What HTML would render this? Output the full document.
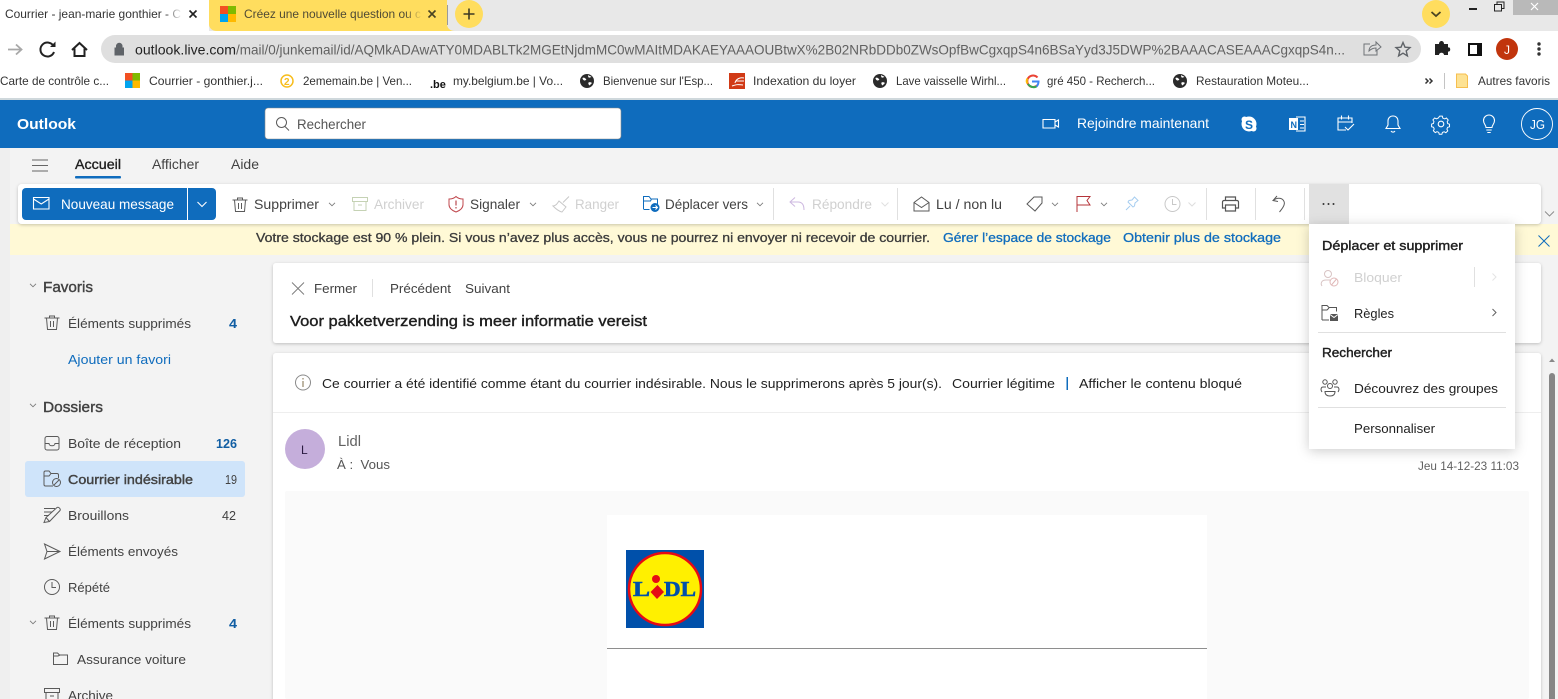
<!DOCTYPE html>
<html lang="fr"><head><meta charset="utf-8"><title>Outlook</title>
<style>
html,body{margin:0;padding:0;width:1558px;height:699px;overflow:hidden;background:#f3f3f3}
svg{display:block}
text{font-family:"Liberation Sans",sans-serif;font-size:13px;fill:#424242;white-space:pre}
.s{stroke:#5a5a5a;stroke-width:1;fill:none}
.w{stroke:#fff;stroke-width:1.1;fill:none}
.k{stroke:#222;stroke-width:2;fill:none}
.g{stroke:#c8c8c8;stroke-width:1;fill:none}
.c{stroke:#7a7a7a;stroke-width:.9;fill:none}
.bm{font-size:12px;fill:#333}
.d{fill:#1f1f1f}
.l{fill:#0f6cbd}
.dis{fill:#d0d0d0}
.b{font-weight:bold}
</style></head><body>
<svg width="1558" height="699" viewBox="0 0 1558 699" xmlns="http://www.w3.org/2000/svg">
<defs>
<linearGradient id="f1"><stop offset="0" stop-color="#fff" stop-opacity="0"/><stop offset="1" stop-color="#fff"/></linearGradient>
<linearGradient id="f2"><stop offset="0" stop-color="#ffdd5e" stop-opacity="0"/><stop offset="1" stop-color="#ffdd5e"/></linearGradient>
<filter id="sh" x="-5%" y="-20%" width="110%" height="140%"><feDropShadow dx="0" dy="1" stdDeviation="1.5" flood-color="#000" flood-opacity=".22"/></filter>
<filter id="sh2" x="-15%" y="-10%" width="130%" height="125%"><feDropShadow dx="0" dy="2" stdDeviation="6" flood-color="#000" flood-opacity=".2"/></filter>
<g id="ch"><path d="M-3-1.200 0 1.800 3-1.200" class="c"/></g>
<g id="gl"><circle r="7" fill="#2b2b2b"/><path d="M-4.500-3c1.500-1 2.500 0 3.500 1s-1 1.500-1.500 1.500-2-1-2-2.500zM1.500 1.500c1.500-1 3 0 3.500.5l-2.500 2.500c-1-1-1.500-2-1-3zM1-6c1 1 2.500 1 3.500 2l-2.500.8c-1-1-1-1.800-1-2.800z" fill="#fff"/></g>
<g id="tr"><path d="M-7.500-5h15M-5.500-5l1 11.500h9l1-11.500M-2.500-5v-2h5v2M-1.500-2v6M1.500-2v6" class="s"/></g>
</defs>

<!-- Chrome tab strip -->
<rect width="1558" height="31" fill="#e8e8e8"/>
<path d="M0 0H209V31H0Z" fill="#fff"/>
<path d="M209 0H447V24C447 28 450 31 455 31H217C212 31 209 28 209 24Z" fill="#ffdd5e"/>
<text x="5" y="18" style="font-size:12px;fill:#333" textLength="176" lengthAdjust="spacingAndGlyphs">Courrier - jean-marie gonthier - C</text>
<rect x="165" y="4" width="17" height="22" fill="url(#f1)"/>
<path d="M189.500 10.500l7 7M196.500 10.500l-7 7" stroke="#222" stroke-width="1.600" fill="none"/>
<rect x="220" y="6" width="8" height="8" fill="#f25022"/><rect x="228" y="6" width="8" height="8" fill="#7fba00"/><rect x="220" y="14" width="8" height="8" fill="#00a4ef"/><rect x="228" y="14" width="8" height="8" fill="#ffb900"/>
<text x="244" y="18" style="font-size:12px;fill:#4f4a35" textLength="177" lengthAdjust="spacingAndGlyphs">Créez une nouvelle question ou c</text>
<rect x="405" y="4" width="17" height="22" fill="url(#f2)"/>
<path d="M428.500 10.500l7 7M435.500 10.500l-7 7" stroke="#4a4422" stroke-width="1.600" fill="none"/>
<rect x="447" y="5" width="1" height="20" fill="#9a9a9a"/>
<circle cx="469" cy="14" r="14" fill="#ffdd5e"/>
<path d="M463.500 14h11M469 8.500v11" stroke="#3d3a24" stroke-width="1.600" fill="none"/>
<circle cx="1436" cy="14" r="14" fill="#ffdd5e"/>
<path d="M1431.500 12l4.500 4 4.500-4" stroke="#4a4422" stroke-width="1.800" fill="none"/>
<rect x="1469" y="8" width="8" height="2" fill="#222"/>
<path d="M1494.500 4.500h7v6.500h-7zM1497 4.500v-2.500h7v6.500h-2.500" stroke="#222" stroke-width="1" fill="none"/>
<rect x="1513" y="0" width="45" height="15" fill="#b9b9b9"/>
<path d="M1531 3l7 7M1538 3l-7 7" stroke="#fff" stroke-width="1.200" fill="none"/>

<!-- Chrome toolbar -->
<rect y="31" width="1558" height="68" fill="#fff"/>
<path d="M8 49.500h13M16 44.500l5.500 5-5.500 5" stroke="#a8a8a8" stroke-width="1.800" fill="none"/>
<path d="M53.500 46A7 7 0 1 0 54 52" class="k"/><path d="M50 47h5.500v-5.500z" fill="#222"/>
<path d="M72 50l7.500-7 7.500 7M74.500 48.500V56h10V48.500" class="k"/>
<rect x="101" y="35" width="1320" height="28" rx="14" fill="#dfdfdf"/>
<path d="M115 48h8.500v7H115zM116.500 48v-2a2.700 2.700 0 0 1 5.500 0v2" fill="#5f6368" stroke="#5f6368"/>
<text x="135" y="54.500" style="font-size:14px;fill:#222" textLength="101" lengthAdjust="spacingAndGlyphs">outlook.live.com</text>
<text x="236" y="54.500" style="font-size:14px;fill:#616161" textLength="1109" lengthAdjust="spacingAndGlyphs">/mail/0/junkemail/id/AQMkADAwATY0MDABLTk2MGEtNjdmMC0wMAItMDAKAEYAAAOUBtwX%2B02NRbDDb0ZWsOpfBwCgxqpS4n6BSaYyd3J5DWP%2BAAACASEAAACgxqpS4n...</text>
<path d="M1370 44h-6v11h13v-5M1369 51c0-4 3-6 7-6v-3l5 5-5 4v-3c-3 0-5 1-7 3z" stroke="#6f7377" stroke-width="1" fill="none"/>
<path d="M1403 42.500l2 4.700 5 .4-3.800 3.300 1.200 5-4.400-2.700-4.400 2.700 1.200-5-3.800-3.300 5-.4z" stroke="#5f6368" stroke-width="1.400" fill="none"/>
<path d="M1436 46h4c0-4 5-4 5 0h4v3.500c3-1 3 5 0 4V57h-4c0-3-5-3-5 0h-4z" fill="#222" transform="translate(-1 -2)"/>
<rect x="1469" y="44" width="12" height="11" fill="none" stroke="#111" stroke-width="2"/><rect x="1477" y="43" width="5" height="13" fill="#111"/>
<circle cx="1507" cy="49" r="11" fill="#c1350d"/>
<text x="1504" y="54" style="font-size:12px;fill:#fff">J</text>
<circle cx="1539" cy="44" r="1.700" fill="#333"/><circle cx="1539" cy="49" r="1.700" fill="#333"/><circle cx="1539" cy="54" r="1.700" fill="#333"/>

<!-- Bookmarks -->
<text class="bm" x="0" y="85" textLength="109" lengthAdjust="spacingAndGlyphs">Carte de contrôle c...</text>
<rect x="125" y="73" width="7.500" height="7.500" fill="#f25022"/><rect x="132.500" y="73" width="7.500" height="7.500" fill="#7fba00"/><rect x="125" y="80.500" width="7.500" height="7.500" fill="#00a4ef"/><rect x="132.500" y="80.500" width="7.500" height="7.500" fill="#ffb900"/>
<text class="bm" x="149" y="85" textLength="114" lengthAdjust="spacingAndGlyphs">Courrier - gonthier.j...</text>
<circle cx="287" cy="81" r="6" fill="none" stroke="#f7bd1d" stroke-width="1.500"/><text x="284" y="85" style="font-size:10px;font-weight:bold;fill:#f7bd1d">2</text>
<text class="bm" x="303" y="85" textLength="109" lengthAdjust="spacingAndGlyphs">2ememain.be | Ven...</text>
<text x="430" y="88" style="font-size:11px;font-weight:bold;fill:#111">.be</text>
<text class="bm" x="453" y="85" textLength="110" lengthAdjust="spacingAndGlyphs">my.belgium.be | Vo...</text>
<use href="#gl" x="587" y="81"/>
<text class="bm" x="603" y="85" textLength="110" lengthAdjust="spacingAndGlyphs">Bienvenue sur l'Esp...</text>
<rect x="729" y="73" width="16" height="16" fill="#d13a16"/><path d="M732 86c3-1 5-2 11-1M735 83c1-4 5-6 9-5M736 81h8" stroke="#fff" fill="none"/>
<text class="bm" x="753" y="85" textLength="103" lengthAdjust="spacingAndGlyphs">Indexation du loyer</text>
<use href="#gl" x="880" y="81"/>
<text class="bm" x="896" y="85" textLength="110" lengthAdjust="spacingAndGlyphs">Lave vaisselle Wirhl...</text>
<path d="M1037.500 77.500A5.800 5.800 0 1 0 1037.500 85" stroke="#ea4335" stroke-width="2" fill="none"/><path d="M1032 81.500h6.500c0 3-1 4-2 5" stroke="#4285f4" stroke-width="2" fill="none"/><path d="M1028 84c2 3 6 4 8.500 2.500" stroke="#34a853" stroke-width="2" fill="none"/><path d="M1027.500 78.500c-1 1.500-1 3.500 0 5" stroke="#fbbc05" stroke-width="2" fill="none"/>
<text class="bm" x="1047" y="85" textLength="108" lengthAdjust="spacingAndGlyphs">gré 450 - Recherch...</text>
<use href="#gl" x="1180" y="81"/>
<text class="bm" x="1196" y="85" textLength="113" lengthAdjust="spacingAndGlyphs">Restauration Moteu...</text>
<path d="M1425.500 78.500l2.500 2.500-2.500 2.500M1429.500 78.500l2.500 2.500-2.500 2.500" stroke="#333" stroke-width="1.500" fill="none"/>
<rect x="1444" y="73" width="1" height="16" fill="#c4c4c4"/>
<path d="M1456.500 74h9l2 2v11.500h-11z" fill="#fde293" stroke="#f6bf4f"/>
<text class="bm" x="1478" y="85" textLength="72" lengthAdjust="spacingAndGlyphs">Autres favoris</text>
<rect y="98" width="1558" height="2" fill="#cfd8dc"/>

<!-- Outlook header -->
<rect y="100" width="1558" height="48" fill="#0f6cbd"/>
<text x="17" y="129" class="b" style="font-size:15px;fill:#fff" textLength="59" lengthAdjust="spacingAndGlyphs">Outlook</text>
<rect x="265" y="108" width="356" height="31" rx="3" fill="#fff" stroke="#8a8a8a" stroke-width=".6"/>
<circle cx="281.500" cy="122.500" r="5" class="s"/><path d="M285 126.500l4 4" class="s"/>
<text x="297" y="129" style="font-size:14px;fill:#555" textLength="69" lengthAdjust="spacingAndGlyphs">Rechercher</text>
<path d="M1043 119.500h12v8.500h-12zM1055 122l3.500-2v7l-3.500-2" class="w"/>
<text x="1077" y="128" style="font-size:14px;fill:#fff" textLength="132" lengthAdjust="spacingAndGlyphs">Rejoindre maintenant</text>
<circle cx="1249" cy="124" r="7.500" fill="#fff"/><rect x="1241.500" y="116.500" width="6" height="6" rx="3" fill="#fff"/><rect x="1250.500" y="125.500" width="6" height="6" rx="3" fill="#fff"/>
<text x="1245" y="129" class="b" style="font-size:12px;fill:#0f6cbd">S</text>
<rect x="1289" y="118" width="9" height="12" fill="#fff"/><path d="M1296 117h9v14h-9M1300 121h4M1300 124.500h4M1300 128h4" class="w"/><text x="1290.500" y="128" class="b" style="font-size:9px;fill:#0f6cbd">N</text>
<path d="M1346 130h-8v-12h14v5M1338 122h14M1341.500 115.500v4M1348.500 115.500v4M1345 127l3 3 6-6" class="w"/>
<path d="M1393 116a4.800 4.800 0 0 0-5 5v4l-2 3.500h14l-2-3.500v-4a4.800 4.800 0 0 0-5-5zM1391 131c1 1.500 3 1.500 4 0" class="w"/>
<circle cx="1441" cy="124" r="2.800" class="w"/><path d="M1439.500 115.500h3l.5 2.200 2.200 1 2-1 2 2.300-1.200 1.900.6 2.100 2.100.7v3l-2.200.6-.8 2 1 2-2.200 2.100-1.900-1.100-2 .7-.6 2.100h-3l-.6-2.100-2-.8-1.900 1.100-2.200-2.100 1-2-.8-2-2.200-.6v-3l2.100-.7.6-2.100-1.200-1.900 2-2.300 2 1 2.200-1z" class="w" transform="translate(1441 124) scale(.88) translate(-1441 -124.500)"/>
<path d="M1486 127.500c0-2.500-2.500-3.500-2.500-7a5.500 5.500 0 0 1 11 0c0 3.500-2.500 4.500-2.500 7zM1486.300 130h5.400M1487.300 132.500h3.400" class="w"/>
<circle cx="1537" cy="124" r="15.500" fill="none" stroke="#fff" stroke-width=".9"/>
<text x="1530" y="129" style="font-size:13px;fill:#fff" textLength="15" lengthAdjust="spacingAndGlyphs">JG</text>

<!-- Left strip / ribbon -->
<rect y="148" width="10" height="551" fill="#efefef"/>
<path d="M32 160h16M32 165.500h16M32 171h16" stroke="#666" stroke-width="1.100" fill="none"/>
<text x="75" y="169" class="d" textLength="46" lengthAdjust="spacingAndGlyphs" style="font-size:14px;stroke:#1f1f1f;stroke-width:.35px">Accueil</text>
<rect x="75" y="176" width="46" height="2.500" rx="1" fill="#0f6cbd"/>
<text x="152" y="169" style="font-size:14px" textLength="47" lengthAdjust="spacingAndGlyphs">Afficher</text>
<text x="231" y="169" style="font-size:14px" textLength="28" lengthAdjust="spacingAndGlyphs">Aide</text>

<rect x="10" y="224" width="1548" height="31" fill="#fff9d6"/>
<rect x="18" y="184" width="1523" height="40" rx="4" fill="#fff" filter="url(#sh)"/>
<path d="M26 188H187V220H26a4 4 0 0 1-4-4V192a4 4 0 0 1 4-4z" fill="#0f6cbd"/>
<path d="M188 188h24a4 4 0 0 1 4 4v24a4 4 0 0 1-4 4h-24z" fill="#0f6cbd"/>
<path d="M33.500 197.500h15.500v11.500h-15.500zM33.500 199l7.750 5 7.750-5" class="w"/>
<text x="61" y="209" style="font-size:14px;fill:#fff" textLength="113" lengthAdjust="spacingAndGlyphs">Nouveau message</text>
<path d="M197.500 202l4.500 4.500 4.500-4.500" class="w"/>
<use href="#tr" x="240" y="205"/>
<text x="254" y="209" style="font-size:14px" textLength="65" lengthAdjust="spacingAndGlyphs">Supprimer</text>
<use href="#ch" x="332" y="204"/>
<path d="M352.500 197.500h15v4h-15zM354 201.500v9h12v-9M358 205h4" stroke="#c5d2b4" stroke-width="1" fill="none"/>
<text x="374" y="209" class="dis" style="font-size:14px" textLength="50" lengthAdjust="spacingAndGlyphs">Archiver</text>
<path d="M456 196.500c2 2 5 2.500 7 2.500v5.500c0 3.500-3 6-7 7.500-4-1.500-7-4-7-7.500v-5.500c2 0 5-.5 7-2.500z" stroke="#c0484e" stroke-width="1" fill="none"/><path d="M456 200.500v5M456 207v1.500" stroke="#b84a4f" stroke-width="1.200"/>
<text x="470" y="209" style="font-size:14px" textLength="50" lengthAdjust="spacingAndGlyphs">Signaler</text>
<use href="#ch" x="533" y="204"/>
<path d="M569 196.500l-6 6M559 201l7 6-4 5c-3-.5-6-3-9-6 2.500 0 4-2 6-5z" class="g"/>
<text x="575" y="209" class="dis" style="font-size:14px" textLength="44" lengthAdjust="spacingAndGlyphs">Ranger</text>
<path d="M643.500 209v-12.500h5.500l2 2.500h6.500v6M643.500 201h7l1-2" stroke="#0f6cbd" stroke-width="1" fill="none"/><path d="M643.500 209.500h6" stroke="#0f6cbd"/>
<circle cx="655" cy="207.500" r="4.500" fill="#0f6cbd"/><path d="M652.500 207.500h4.500M655.500 205.500l2 2-2 2" stroke="#fff" fill="none"/>
<text x="665" y="209" style="font-size:14px" textLength="83" lengthAdjust="spacingAndGlyphs">Déplacer vers</text>
<use href="#ch" x="760" y="204"/>
<rect x="773" y="188" width="1" height="32" fill="#e0e0e0"/>
<path d="M795 197.500l-5 4.500 5 4.500M790 202h8c4 0 6 3 6 8" stroke="#cdb8e0" stroke-width="1" fill="none"/>
<text x="812" y="209" class="dis" style="font-size:14px" textLength="60" lengthAdjust="spacingAndGlyphs">Répondre</text>
<path d="M881.500 202.500l3.500 3.500 3.500-3.500" class="g" style="stroke:#e0e0e0"/>
<rect x="897" y="188" width="1" height="32" fill="#e0e0e0"/>
<path d="M914 202.500l7.500-5.500 7.500 5.500v8.500h-15zM914 202.500l7.500 5 7.500-5" class="s"/>
<text x="936" y="209" style="font-size:14px" textLength="66" lengthAdjust="spacingAndGlyphs">Lu / non lu</text>
<path d="M1027 204l7-7h8v6l-7 8zM1039.500 199.800h.1" class="s"/>
<use href="#ch" x="1055" y="204"/>
<path d="M1077 212v-15.500h13l-3 4 3 4.500h-13" stroke="#b5343a" stroke-width="1" fill="none"/>
<use href="#ch" x="1104" y="204"/>
<path d="M1126 210l4-4M1128 202l5 5 1.500-1 .5-3 3-2.500-3.500-3.500-2.500 3-3 .5z" stroke="#a6cdf0" stroke-width="1" fill="none"/>
<circle cx="1172.500" cy="204" r="7.500" class="g"/><path d="M1172.500 199v5.500h4" class="g"/>
<path d="M1188.500 202.500l3.500 3.500 3.500-3.500" class="g" style="stroke:#dedede"/>
<rect x="1206" y="188" width="1" height="32" fill="#e0e0e0"/>
<path d="M1225.500 201v-4h10v4M1225.500 208h-3v-6a1.500 1.500 0 0 1 1.500-1.500h13a1.500 1.500 0 0 1 1.500 1.500v6h-3M1225.500 205h10v6h-10z" stroke="#555" stroke-width="1.200" fill="none"/>
<rect x="1255" y="188" width="1" height="32" fill="#e0e0e0"/>
<path d="M1277 196l-4 4.500 5 1M1273.500 200.500c3-3 8-3 10 0 2 3 .5 6-4 11.500" class="s"/>
<rect x="1304" y="188" width="1" height="32" fill="#e0e0e0"/>
<rect x="1309" y="184" width="40" height="40" fill="#e1e1e1"/>
<circle cx="1323.500" cy="204" r="1" fill="#333"/><circle cx="1328.500" cy="204" r="1" fill="#333"/><circle cx="1333.500" cy="204" r="1" fill="#333"/>
<path d="M1545 211.500l4.500 4.500 4.500-4.500" class="c" style="stroke:#888"/>

<!-- Banner -->
<text x="256" y="242" style="font-size:13px;fill:#3b3b3b;stroke:#3b3b3b;stroke-width:.3px" textLength="674" lengthAdjust="spacingAndGlyphs">Votre stockage est 90 % plein. Si vous n’avez plus accès, vous ne pourrez ni envoyer ni recevoir de courrier.</text>
<text x="943" y="242" class="l" style="stroke:#0f6cbd;stroke-width:.3px" textLength="168" lengthAdjust="spacingAndGlyphs">Gérer l’espace de stockage</text>
<text x="1123" y="242" class="l" style="stroke:#0f6cbd;stroke-width:.3px" textLength="158" lengthAdjust="spacingAndGlyphs">Obtenir plus de stockage</text>
<path d="M1538.500 235.500l11 11M1549.500 235.500l-11 11" stroke="#0f6cbd" stroke-width="1" fill="none"/>

<!-- Sidebar -->
<use href="#ch" x="33" y="285"/>
<text x="43" y="292" style="font-size:15px;stroke:#424242;stroke-width:.4px" textLength="50" lengthAdjust="spacingAndGlyphs">Favoris</text>
<use href="#tr" x="52" y="323"/>
<text x="68" y="328" textLength="123" lengthAdjust="spacingAndGlyphs">Éléments supprimés</text>
<text x="229" y="328" class="b" style="fill:#115ea3" textLength="8" lengthAdjust="spacingAndGlyphs">4</text>
<text x="68" y="364" class="l" textLength="103" lengthAdjust="spacingAndGlyphs">Ajouter un favori</text>
<use href="#ch" x="33" y="405"/>
<text x="43" y="412" style="font-size:15px;stroke:#424242;stroke-width:.4px" textLength="60" lengthAdjust="spacingAndGlyphs">Dossiers</text>
<path d="M45 438.500a2 2 0 0 1 2-2h10a2 2 0 0 1 2 2v9.500a2 2 0 0 1-2 2H47a2 2 0 0 1-2-2zM45 443.500h4c0 3 6 3 6 0h4" class="s"/>
<text x="68" y="448" textLength="113" lengthAdjust="spacingAndGlyphs">Boîte de réception</text>
<text x="216" y="448" class="b" style="fill:#115ea3" textLength="21" lengthAdjust="spacingAndGlyphs">126</text>
<rect x="25" y="461" width="220" height="36" rx="3" fill="#cfe4fa"/>
<path d="M53 486h-7.500a1.500 1.500 0 0 1-1.500-1.500v-12a1.500 1.500 0 0 1 1.500-1.500h3.500l2 2.500h6a1.500 1.500 0 0 1 1.500 1.500v3M44 476h5l2-2.500" class="s"/><circle cx="56.500" cy="482.500" r="4" class="s"/><path d="M54 485l5-5" class="s"/>
<text x="68" y="484" style="stroke:#424242;stroke-width:.4px" textLength="125" lengthAdjust="spacingAndGlyphs">Courrier indésirable</text>
<text x="225" y="484" textLength="12" lengthAdjust="spacingAndGlyphs">19</text>
<path d="M44 508.500h11M44 512h8M44 515.500h5M44 522.500l2-5 11-10c1.500-1 4 1.500 3 3l-10.500 11zM46 517.500l3.500 4" class="s"/>
<text x="68" y="520" textLength="61" lengthAdjust="spacingAndGlyphs">Brouillons</text>
<text x="222" y="520" textLength="14" lengthAdjust="spacingAndGlyphs">42</text>
<path d="M44.500 544l15.500 7.500-15.500 7.500 2.500-7.500zM47 551.500h13" class="s"/>
<text x="68" y="556" textLength="110" lengthAdjust="spacingAndGlyphs">Éléments envoyés</text>
<circle cx="52" cy="587" r="7.500" class="s"/><path d="M52 582v5.500h4" class="s"/>
<text x="68" y="592" textLength="42" lengthAdjust="spacingAndGlyphs">Répété</text>
<use href="#ch" x="33" y="622"/>
<use href="#tr" x="52" y="623"/>
<text x="68" y="628" textLength="123" lengthAdjust="spacingAndGlyphs">Éléments supprimés</text>
<text x="229" y="628" class="b" style="fill:#115ea3" textLength="8" lengthAdjust="spacingAndGlyphs">4</text>
<path d="M53.500 653.500v11h14v-9.500h-8l-2-2h-4zM53.500 656h4.500l2-1" class="s"/>
<text x="77" y="664" textLength="109" lengthAdjust="spacingAndGlyphs">Assurance voiture</text>
<path d="M44.500 688.500h15v4h-15zM46 692.500v8h12v-8M50 696h4" class="s"/>
<text x="68" y="700" textLength="45" lengthAdjust="spacingAndGlyphs">Archive</text>

<!-- Reading pane -->
<rect x="273" y="263" width="1268" height="80" rx="3" fill="#fff" filter="url(#sh)"/>
<path d="M292 282.500l12 12M304 282.500l-12 12" class="c"/>
<text x="314" y="293" textLength="43" lengthAdjust="spacingAndGlyphs">Fermer</text>
<rect x="372" y="279" width="1" height="18" fill="#e0e0e0"/>
<text x="390" y="293" textLength="61" lengthAdjust="spacingAndGlyphs">Précédent</text>
<text x="465" y="293" textLength="45" lengthAdjust="spacingAndGlyphs">Suivant</text>
<text x="290" y="326" class="d" style="font-size:15px;stroke:#1f1f1f;stroke-width:.4px" textLength="357" lengthAdjust="spacingAndGlyphs">Voor pakketverzending is meer informatie vereist</text>

<rect x="273" y="353" width="1268" height="360" rx="3" fill="#fff" filter="url(#sh)"/>
<circle cx="303" cy="382.500" r="7.500" stroke="#8a8a8a" stroke-width="1" fill="none"/><path d="M303 381v6M303 378v1.500" stroke="#8a7a5a" stroke-width="1.100"/>
<text x="322" y="388" class="d" textLength="620" lengthAdjust="spacingAndGlyphs">Ce courrier a été identifié comme étant du courrier indésirable. Nous le supprimerons après 5 jour(s).</text>
<text x="952" y="388" class="d" textLength="103" lengthAdjust="spacingAndGlyphs">Courrier légitime</text>
<rect x="1066.500" y="377" width="1.500" height="13" fill="#0f6cbd"/>
<text x="1079" y="388" class="d" textLength="163" lengthAdjust="spacingAndGlyphs">Afficher le contenu bloqué</text>
<rect x="273" y="412" width="1268" height="1" fill="#eee"/>
<circle cx="305" cy="449" r="20" fill="#c5aedb"/>
<text x="301" y="454" style="font-size:12px;fill:#2a1a40">L</text>
<text x="338" y="446" style="font-size:15px;fill:#616161" textLength="23" lengthAdjust="spacingAndGlyphs">Lidl</text>
<text x="337" y="469" style="fill:#555" textLength="53" lengthAdjust="spacingAndGlyphs">À :  Vous</text>
<text x="1418" y="470" style="font-size:12px;fill:#616161" textLength="101" lengthAdjust="spacingAndGlyphs">Jeu 14-12-23 11:03</text>
<rect x="285" y="491" width="1244" height="208" rx="2" fill="#fafafa"/>
<rect x="607" y="515" width="600" height="184" fill="#fff"/>
<rect x="607" y="648" width="600" height="1" fill="#8e8e8e"/>
<!-- Lidl logo -->
<rect x="626" y="550" width="78" height="78" fill="#0050aa"/>
<circle cx="665" cy="589" r="36" fill="#fff000" stroke="#e60a14" stroke-width="2.500"/>
<text x="633" y="596" style="font-size:21px;font-weight:bold;fill:#0050aa;font-family:'Liberation Serif',serif;stroke:#0050aa;stroke-width:.6px" textLength="17" lengthAdjust="spacingAndGlyphs">L</text>
<text x="664" y="596" style="font-size:21px;font-weight:bold;fill:#0050aa;font-family:'Liberation Serif',serif;stroke:#0050aa;stroke-width:.6px" textLength="32" lengthAdjust="spacingAndGlyphs">DL</text>
<circle cx="656" cy="579" r="4" fill="#e60a14"/>
<path d="M657.500 585l6.500 7-7 7-6.500-7z" fill="#e60a14"/>

<!-- Scrollbar -->
<path d="M1549 362l3-3.500 3 3.500z" fill="#888"/>
<rect x="1549" y="373" width="6" height="330" rx="3" fill="#868686"/>

<!-- Menu -->
<rect x="1309" y="224" width="206" height="225" fill="#fff" filter="url(#sh2)"/>
<text x="1322" y="250" class="d" style="stroke:#1f1f1f;stroke-width:.4px" textLength="141" lengthAdjust="spacingAndGlyphs">Déplacer et supprimer</text>
<circle cx="1328" cy="274" r="3.500" stroke="#d8c4c4" fill="none"/><path d="M1322 286c-2-3 0-6 4-6h4" stroke="#d8c4c4" fill="none"/><circle cx="1334" cy="282" r="4" stroke="#e0b8b8" fill="none"/><path d="M1331.500 285l5-6" stroke="#e0b8b8"/>
<text x="1354" y="282" class="dis" textLength="48" lengthAdjust="spacingAndGlyphs">Bloquer</text>
<rect x="1474" y="267" width="1" height="20" fill="#e0e0e0"/>
<path d="M1492.500 273.500l3.500 3.500-3.500 3.500" stroke="#e4e4e4" fill="none"/>
<path d="M1322 320v-14.500h5l2 2h7.500v4M1322 310h5l2-2M1322 320h7" stroke="#555" fill="none"/><rect x="1330" y="314" width="8" height="7" fill="#555"/><path d="M1330 314.500l4 3 4-3" stroke="#fff" fill="none"/>
<text x="1354" y="318" class="d" textLength="40" lengthAdjust="spacingAndGlyphs">Règles</text>
<path d="M1492.500 309l3.500 3.500-3.500 3.500" stroke="#616161" fill="none"/>
<rect x="1318" y="332" width="188" height="1" fill="#e0e0e0"/>
<text x="1322" y="357" class="d" style="stroke:#1f1f1f;stroke-width:.4px" textLength="70" lengthAdjust="spacingAndGlyphs">Rechercher</text>
<g stroke="#555" fill="none"><circle cx="1325" cy="382" r="2.200"/><circle cx="1335" cy="382" r="2.200"/><circle cx="1330" cy="386" r="2.500"/><path d="M1322 392c-2-3-.5-5 1-5h3M1338 392c2-3 .5-5-1-5h-3M1325 391.500h10c0 3-2 4.500-5 4.500s-5-1.500-5-4.500z"/></g>
<text x="1354" y="393" class="d" textLength="144" lengthAdjust="spacingAndGlyphs">Découvrez des groupes</text>
<rect x="1318" y="407" width="188" height="1" fill="#e0e0e0"/>
<text x="1354" y="433" class="d" textLength="81" lengthAdjust="spacingAndGlyphs">Personnaliser</text>
</svg>
</body></html>
